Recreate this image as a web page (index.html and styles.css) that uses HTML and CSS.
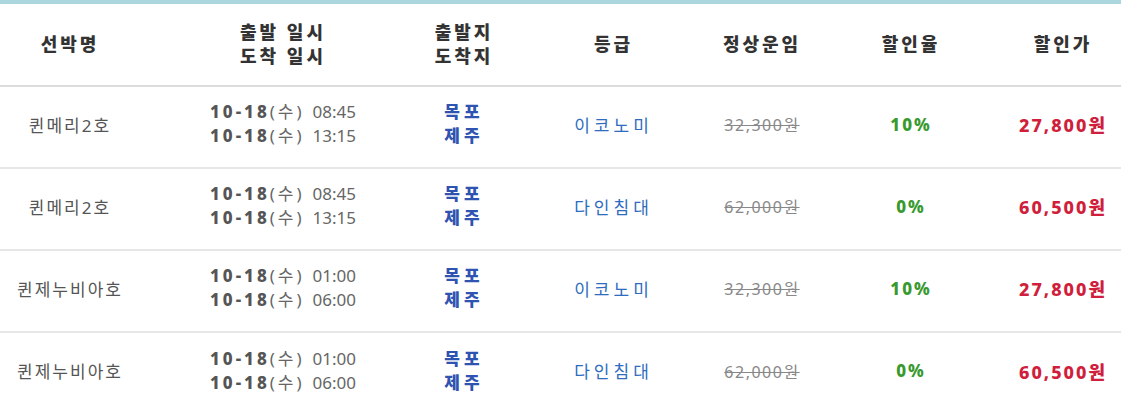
FILE: index.html
```html
<!DOCTYPE html>
<html lang="ko">
<head>
<meta charset="utf-8">
<link rel="stylesheet" href="styles.css">
</head>
<body>
<table class="fares">
  <colgroup>
    <col class="w1"><col class="w2"><col class="w3"><col class="w4"><col class="w5"><col class="w6"><col class="w7">
  </colgroup>
  <thead>
    <tr>
      <th class="c1">선박명</th>
      <th class="c2">출발 일시<br>도착 일시</th>
      <th class="c3">출발지<br>도착지</th>
      <th class="c4">등급</th>
      <th class="c5">정상운임</th>
      <th class="c6">할인율</th>
      <th class="c7">할인가</th>
    </tr>
  </thead>
  <tbody>
    <tr>
      <td class="c1 ship">퀸메리2호</td>
      <td class="c2 when"><b>10-18</b><span class="dow">(수)</span>08:45<br><b>10-18</b><span class="dow">(수)</span>13:15</td>
      <td class="c3 port">목포<br>제주</td>
      <td class="c4 grade">이코노미</td>
      <td class="c5 normal"><s>32,300원</s></td>
      <td class="c6 rate">10%</td>
      <td class="c7 price">27,800원</td>
    </tr>
    <tr>
      <td class="c1 ship">퀸메리2호</td>
      <td class="c2 when"><b>10-18</b><span class="dow">(수)</span>08:45<br><b>10-18</b><span class="dow">(수)</span>13:15</td>
      <td class="c3 port">목포<br>제주</td>
      <td class="c4 grade">다인침대</td>
      <td class="c5 normal"><s>62,000원</s></td>
      <td class="c6 rate">0%</td>
      <td class="c7 price">60,500원</td>
    </tr>
    <tr>
      <td class="c1 ship">퀸제누비아호</td>
      <td class="c2 when"><b>10-18</b><span class="dow">(수)</span>01:00<br><b>10-18</b><span class="dow">(수)</span>06:00</td>
      <td class="c3 port">목포<br>제주</td>
      <td class="c4 grade">이코노미</td>
      <td class="c5 normal"><s>32,300원</s></td>
      <td class="c6 rate">10%</td>
      <td class="c7 price">27,800원</td>
    </tr>
    <tr>
      <td class="c1 ship">퀸제누비아호</td>
      <td class="c2 when"><b>10-18</b><span class="dow">(수)</span>01:00<br><b>10-18</b><span class="dow">(수)</span>06:00</td>
      <td class="c3 port">목포<br>제주</td>
      <td class="c4 grade">다인침대</td>
      <td class="c5 normal"><s>62,000원</s></td>
      <td class="c6 rate">0%</td>
      <td class="c7 price">60,500원</td>
    </tr>
  </tbody>
</table>
</body>
</html>
```
FILE: styles.css
```css
html, body {
  margin: 0;
  padding: 0;
  background: #fff;
}
body {
  font-family: "Noto Sans", "Noto Sans CJK KR", sans-serif;
  color: #555;
}
.fares {
  width: 1121px;
  border-collapse: collapse;
  table-layout: fixed;
  border-top: 4px solid #acd6de;
}
.w1 { width: 176px; }
.w2 { width: 197px; }
.w3 { width: 166px; }
.w4 { width: 149px; }
.w5 { width: 148px; }
.w6 { width: 150px; }
.w7 { width: 135px; }

.fares th,
.fares td {
  text-align: center;
  vertical-align: middle;
  padding: 0;
  white-space: nowrap;
}
.fares thead th {
  height: 79px;
  font-size: 18px;
  font-weight: 800;
  color: #333;
  line-height: 24px;
  letter-spacing: 3px;
  border-bottom: 2px solid #dcdcdc;
  padding-bottom: 2px;
}
.fares tbody td {
  height: 82px;
  border-bottom: 2px solid #e6e6e6;
  padding-bottom: 6px;
  box-sizing: border-box;
}
.fares tbody tr:last-child td {
  border-bottom: none;
}
.fares .c1 { padding-right: 36px; }
.fares .c2 { padding-left: 17px; }
.fares .c3 { padding-left: 16px; }
.fares .c7 { padding-left: 19px; }

.ship {
  font-size: 17px;
  letter-spacing: 2px;
  color: #555;
}
.when {
  font-size: 17px;
  line-height: 24px;
  color: #666;
}
.when b {
  color: #555;
  font-weight: 800;
  letter-spacing: 3px;
}
.when .dow {
  letter-spacing: 3px;
  margin-right: 8px;
}
.port {
  font-size: 17px;
  line-height: 24px;
  font-weight: 800;
  color: #2f53b0;
  letter-spacing: 4px;
}
.grade {
  font-size: 17px;
  color: #2e6cc0;
  letter-spacing: 4px;
}
.normal {
  font-size: 16px;
  color: #888;
  letter-spacing: 1.5px;
}
.normal s {
  text-decoration-thickness: 1px;
}
.rate {
  font-size: 17px;
  font-weight: 800;
  color: #389a2e;
  letter-spacing: 2px;
}
.price {
  font-size: 18px;
  font-weight: 800;
  color: #cf1f3c;
  letter-spacing: 2px;
}
```
